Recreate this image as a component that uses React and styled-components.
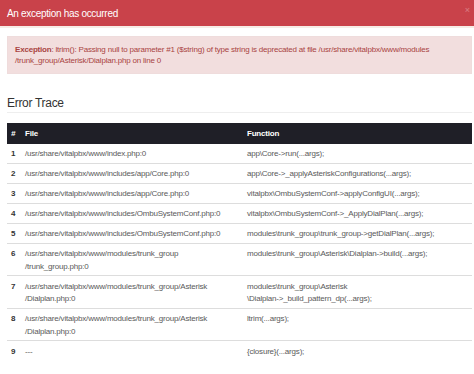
import styled, { createGlobalStyle } from 'styled-components';

const GlobalStyle = createGlobalStyle`
  html, body {
    margin: 0;
    padding: 0;
    background: #ffffff;
    font-family: 'Liberation Sans', Arial, sans-serif;
  }
`;

const Page = styled.div`
  width: 474px;
  height: 374px;
  overflow: hidden;
  display: flex;
  flex-direction: column;
`;

const Header = styled.div`
  height: 26px;
  flex-shrink: 0;
  background: #c9424a;
  border-bottom: 2px solid #f6ece6;
  display: flex;
  align-items: center;
  justify-content: space-between;
  padding: 0 4px 0 7px;
  color: #ffffff;
`;

const Title = styled.h1`
  margin: 0;
  font-size: 10px;
  letter-spacing: -0.3px;
  font-weight: 400;
`;

const Close = styled.span`
  font-size: 9px;
  opacity: 0.3;
  margin-top: -6px;
`;

const Body = styled.div`
  padding: 8px 2px 0 7px;
  display: flex;
  flex-direction: column;
`;

const Alert = styled.div`
  background: #f2dede;
  color: #a94442;
  font-size: 8px;
  letter-spacing: -0.2px;
  line-height: 11px;
  padding: 7px 9px 7px 7px;
  border: 1px solid #efdcdc;
  white-space: nowrap;
`;

const Heading = styled.h2`
  margin: 22px 0 0;
  font-size: 12px;
  line-height: 14px;
  letter-spacing: -0.3px;
  font-weight: 400;
  color: #333333;
  padding-bottom: 2px;
  border-bottom: 1px solid #eeeeee;
`;

const Table = styled.table`
  margin-top: 10px;
  width: 100%;
  table-layout: fixed;
  border-collapse: collapse;
  font-size: 8px;
  letter-spacing: -0.2px;
  line-height: 12.5px;
  color: #5a5a5a;
`;

const HeadCell = styled.th`
  background: #1f1f27;
  color: #ffffff;
  font-weight: 700;
  text-align: left;
  padding: 4.5px 4px 3.5px;
  width: ${(p) => p.$width || 'auto'};
  font-style: ${(p) => (p.$italic ? 'italic' : 'normal')};
`;

const Row = styled.tr`
  border-top: 1px solid #dddddd;
  &:first-child {
    border-top: none;
  }
`;

const Cell = styled.td`
  padding: 4.5px 4px ${(p) => (p.$tall ? '15px' : '2px')};
  vertical-align: top;
  white-space: nowrap;
  color: ${(p) => (p.$num ? '#333333' : '#5a5a5a')};
  font-weight: ${(p) => (p.$num ? 700 : 400)};
`;

const frames = [
  { file: ['/usr/share/vitalpbx/www/index.php:0'], fn: ['app\\Core->run(...args);'] },
  { file: ['/usr/share/vitalpbx/www/includes/app/Core.php:0'], fn: ['app\\Core->_applyAsteriskConfigurations(...args);'] },
  { file: ['/usr/share/vitalpbx/www/includes/app/Core.php:0'], fn: ['vitalpbx\\OmbuSystemConf->applyConfigUI(...args);'] },
  { file: ['/usr/share/vitalpbx/www/includes/OmbuSystemConf.php:0'], fn: ['vitalpbx\\OmbuSystemConf->_ApplyDialPlan(...args);'] },
  { file: ['/usr/share/vitalpbx/www/includes/OmbuSystemConf.php:0'], fn: ['modules\\trunk_group\\trunk_group->getDialPlan(...args);'] },
  {
    file: ['/usr/share/vitalpbx/www/modules/trunk_group', '/trunk_group.php:0'],
    fn: ['modules\\trunk_group\\Asterisk\\Dialplan->build(...args);'],
  },
  {
    file: ['/usr/share/vitalpbx/www/modules/trunk_group/Asterisk', '/Dialplan.php:0'],
    fn: ['modules\\trunk_group\\Asterisk', '\\Dialplan->_build_pattern_dp(...args);'],
  },
  {
    file: ['/usr/share/vitalpbx/www/modules/trunk_group/Asterisk', '/Dialplan.php:0'],
    fn: ['ltrim(...args);'],
  },
  { file: ['---'], fn: ['{closure}(...args);'], tall: true },
];

function Lines({ lines }) {
  return lines.map((l, i) => (
    <span key={i}>
      {i > 0 && <br />}
      {l}
    </span>
  ));
}

export default function App() {
  return (
    <Page>
      <GlobalStyle />
      <Header>
        <Title>An exception has occurred</Title>
        <Close>×</Close>
      </Header>
      <Body>
        <Alert>
          <b>Exception</b>: ltrim(): Passing null to parameter #1 ($string) of type string is deprecated at file
          /usr/share/vitalpbx/www/modules
          <br />
          /trunk_group/Asterisk/Dialplan.php on line 0
        </Alert>
        <Heading>Error Trace</Heading>
        <Table>
          <thead>
            <tr>
              <HeadCell $width="6px" $italic>#</HeadCell>
              <HeadCell $width="214px">File</HeadCell>
              <HeadCell>Function</HeadCell>
            </tr>
          </thead>
          <tbody>
            {frames.map((f, i) => (
              <Row key={i}>
                <Cell $num $tall={f.tall}>{i + 1}</Cell>
                <Cell $tall={f.tall}>
                  <Lines lines={f.file} />
                </Cell>
                <Cell $tall={f.tall}>
                  <Lines lines={f.fn} />
                </Cell>
              </Row>
            ))}
          </tbody>
        </Table>
      </Body>
    </Page>
  );
}
